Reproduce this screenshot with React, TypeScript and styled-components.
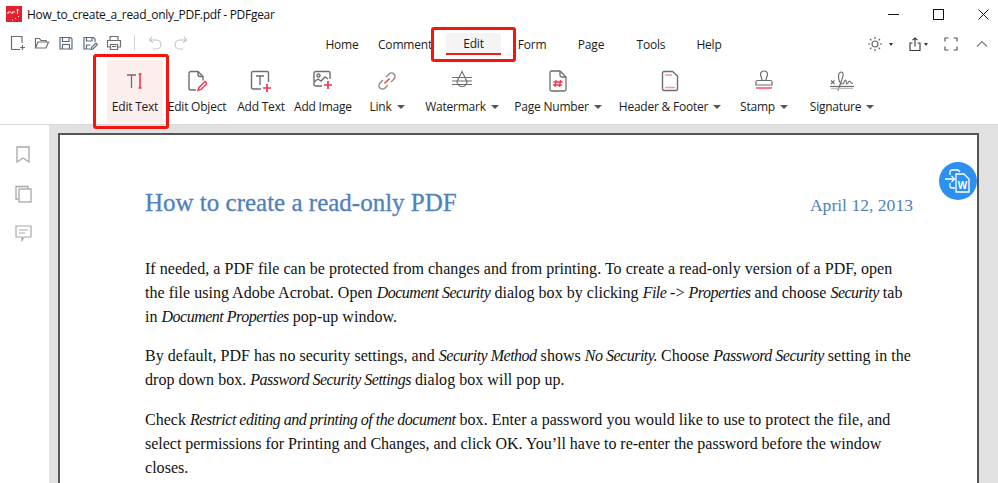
import React from "react";
import styled, { createGlobalStyle } from "styled-components";

const Global = createGlobalStyle`
  html, body { margin: 0; padding: 0; background: #fff; }
  body { width: 998px; height: 483px; overflow: hidden; font-family: "Open Sans", "Noto Sans", sans-serif; }
`;

const Shell = styled.div`
  position: relative;
  width: 998px;
  height: 483px;
  overflow: hidden;
  display: flex;
  flex-direction: column;
`;
const TitleBar = styled.div`
  height: 28px;
  display: flex;
  align-items: center;
  padding-left: 6px;
  flex: none;
`;
const TitleText = styled.div`
  margin-left: 5px;
  font-size: 12px;
  letter-spacing: -0.3px;
  color: #111;
  white-space: nowrap;
`;
const WindowButtons = styled.div`
  margin-left: auto;
  display: flex;
  align-items: center;
  gap: 34px;
  padding-right: 9px;
`;
const MenuRow = styled.div`
  height: 32px;
  flex: none;
  display: flex;
  align-items: center;
  position: relative;
`;
const Quick = styled.div`
  width: 313px;
  flex: none;
  display: flex;
  align-items: center;
  padding: 0 0 3px 10px;
  box-sizing: border-box;
  gap: 8px;
`;
const Divider = styled.div`
  width: 1px;
  height: 15px;
  background: #d5d5d5;
  margin: 0 5px 0 4px;
`;
const Tabs = styled.div`
  display: flex;
  align-items: center;
`;
const Tab = styled.div<{ $w: number; $gap?: number; $active?: boolean }>`
  width: ${(p) => p.$w}px;
  margin-left: ${(p) => p.$gap ?? 0}px;
  height: 22px;
  box-sizing: border-box;
  display: flex;
  align-items: center;
  justify-content: center;
  font-size: 12px;
  letter-spacing: -0.2px;
  color: #1b1b1b;
  white-space: nowrap;
  border-radius: 3px 3px 0 0;
  background: ${(p) => (p.$active ? "#f4f4f4" : "transparent")};
  border-bottom: ${(p) => (p.$active ? "2px solid #f01c1c" : "0")};
`;
const RightTools = styled.div`
  margin-left: auto;
  display: flex;
  align-items: center;
  padding-right: 2px;
`;
const RightBtn = styled.div<{ $w: number; $gap?: number }>`
  width: ${(p) => p.$w}px;
  display: flex;
  align-items: center;
  justify-content: center;
  gap: ${(p) => p.$gap ?? 2}px;
`;
const Toolbar = styled.div`
  height: 64px;
  flex: none;
  display: flex;
  padding-left: 107px;
  box-sizing: border-box;
`;
const Tool = styled.div<{ $w: number; $active?: boolean }>`
  width: ${(p) => p.$w}px;
  height: 63px;
  flex: none;
  border-radius: 3px;
  background: ${(p) => (p.$active ? "#fdeeee" : "transparent")};
  display: flex;
  flex-direction: column;
  align-items: center;
`;
const ToolIcon = styled.div`
  height: 26px;
  margin-top: 8px;
  display: flex;
  align-items: center;
  justify-content: center;
`;
const ToolLabel = styled.div`
  margin-top: 5px;
  font-size: 12px;
  letter-spacing: -0.22px;
  line-height: 16px;
  color: #1b1b1b;
  white-space: nowrap;
  display: flex;
  align-items: center;
  gap: 5px;
`;
const Caret = styled.span`
  width: 0;
  height: 0;
  border-left: 4px solid transparent;
  border-right: 4px solid transparent;
  border-top: 4px solid #555;
`;
const Body = styled.div`
  flex: 1;
  display: flex;
  background: #e1e1e1;
  border-top: 1px solid #d8d8d8;
  min-height: 0;
`;
const Sidebar = styled.div`
  width: 49px;
  flex: none;
  background: #fff;
  display: flex;
  flex-direction: column;
  align-items: center;
  padding: 21px 3px 0 0;
  box-sizing: border-box;
  gap: 22px;
`;
const PageArea = styled.div`
  flex: 1;
  padding: 8px 19px 0 9px;
  min-width: 0;
`;
const Page = styled.div`
  background: #fff;
  border: 2px solid #555;
  border-bottom: 0;
  height: 400px;
  box-sizing: border-box;
  padding: 50px 64px 0 85px;
  font-family: "Liberation Serif", serif;
  color: #111;
`;
const HeadRow = styled.div`
  display: flex;
  justify-content: space-between;
  align-items: baseline;
  color: #4f81bd;
  margin-bottom: 36px;
`;
const DocTitle = styled.div`
  font-size: 25px;
  line-height: 36px;
  font-weight: 400;
  -webkit-text-stroke: 0.3px #4f81bd;
`;
const DocDate = styled.div`
  font-size: 17.6px;
`;
const Para = styled.div<{ $mb: number }>`
  margin-bottom: ${(p) => p.$mb}px;
`;
const Line = styled.div<{ $sp?: number }>`
  font-size: 16px;
  line-height: 24px;
  white-space: nowrap;
  letter-spacing: ${(p) => p.$sp ?? 0.03}px;
`;
const It = styled.em`
  letter-spacing: -0.5px;
`;
const Convert = styled.div`
  position: absolute;
  left: 939px;
  top: 162px;
  width: 38px;
  height: 38px;
  border-radius: 50%;
  background: #2b90ef;
  display: flex;
  align-items: center;
  justify-content: center;
`;
const Highlight = styled.div<{ $x: number; $y: number; $w: number; $h: number }>`
  position: absolute;
  left: ${(p) => p.$x}px;
  top: ${(p) => p.$y}px;
  width: ${(p) => p.$w}px;
  height: ${(p) => p.$h}px;
  box-sizing: border-box;
  border: 3px solid #f5140f;
  border-radius: 3px;
  pointer-events: none;
`;

const G = "#6e6e6e";
const L = "#c4c4c4";
const R = "#f4364a";

const Ico = ({ s = 16, w, h, children, sw = 1.2, c = G }: { s?: number; w?: number; h?: number; children: React.ReactNode; sw?: number; c?: string }) => (
  <svg width={w ?? s} height={h ?? s} viewBox={`0 0 ${w ?? s} ${h ?? s}`} fill="none" stroke={c} strokeWidth={sw} style={{ display: "block" }}>
    {children}
  </svg>
);

const Logo = () => (
  <svg width="16" height="16" viewBox="0 0 16 16" style={{ display: "block" }}>
    <rect width="16" height="16" fill="#e5202e" />
    <path d="M2 8V6h3M6 8V6h3M10.5 4h2.5M11.5 8V3M12 10l1 1M9 12l1 1M6 14h1" stroke="#fff" strokeWidth="1" fill="none" />
  </svg>
);

const Q = {
  New: () => (
    <Ico s={16}>
      <path d="M10 14.5H1.5V1.5H12V8" />
      <path d="M12.5 10v5M10 12.5h5" />
    </Ico>
  ),
  Open: () => (
    <Ico s={16}>
      <path d="M1.5 13V3.5h4l1.5 2h5V7" />
      <path d="M1.5 13l2.5-6h10.5l-2.5 6z" />
    </Ico>
  ),
  Save: () => (
    <Ico s={16} c="#5a6b80">
      <path d="M2 2.5h10.5l1.5 1.5v10H2z" />
      <path d="M4.5 2.5v4h6.5v-4M4.5 14v-4.5h7V14" />
    </Ico>
  ),
  SaveAs: () => (
    <Ico s={16} c="#5a6b80">
      <path d="M8 14H2V2.5h9.5l1.5 1.5v3" />
      <path d="M4.5 2.5v3.5h5.5v-3.5M4.5 14v-4h4" />
      <path d="M9 14.5l.5-2 4.5-4.5 1.5 1.5-4.5 4.5z" />
    </Ico>
  ),
  Print: () => (
    <Ico s={16}>
      <path d="M4 5V1.5h8V5M4 12H1.5V5.5h13V12H12" />
      <path d="M4.5 9.5h7v5h-7z" />
      <path d="M6 11.5h4" />
    </Ico>
  ),
  Undo: ({ c }: { c: string }) => (
    <Ico s={16} c={c}>
      <path d="M4 1.5L1.5 5 5 7.5M1.5 5h7a4.2 4.2 0 010 9H5" />
    </Ico>
  ),
  Redo: ({ c }: { c: string }) => (
    <Ico s={16} c={c}>
      <path d="M12 1.5L14.5 5 11 7.5M14.5 5h-7a4.2 4.2 0 000 9H11" />
    </Ico>
  ),
};

const T = {
  EditText: () => (
    <Ico w={18} h={18} sw={1.3}>
      <path d="M1 3h9M5.5 3v13" />
      <path d="M14 2v14" stroke={R} strokeWidth="1.6" />
      <path d="M12.5 2h3M12.5 16h3" stroke={R} />
    </Ico>
  ),
  EditObject: () => (
    <Ico w={20} h={22} sw={1.4}>
      <path d="M9 20H4a2 2 0 01-2-2V3.500a2 2 0 012-2h7l5 5v4" />
      <path d="M11 1.500v3a2 2 0 002 2h3" />
      <path d="M11 20.500l1-3 6-6 2 2-6 6z" stroke={R} />
    </Ico>
  ),
  AddText: () => (
    <Ico w={22} h={22} sw={1.4}>
      <path d="M11 19H3a1.500 1.500 0 01-1.500-1.500V3A1.500 1.500 0 013 1.500h14A1.500 1.500 0 0118.500 3v9" />
      <path d="M6 6h8M10 6v9" />
      <path d="M17 14v8M13 18h8" stroke={R} strokeWidth="1.7" />
    </Ico>
  ),
  AddImage: () => (
    <Ico w={20} h={22} sw={1.4}>
      <path d="M9 16H2.500A1.500 1.500 0 011 14.500V3a1.500 1.500 0 011.500-1.500h13A1.500 1.500 0 0117 3v6" />
      <circle cx="5.500" cy="5.500" r="1.500" />
      <path d="M1 12l4-3 3 2 4-4 3 2" />
      <path d="M15 11v8M11 15h8" stroke={R} strokeWidth="1.7" />
    </Ico>
  ),
  Link: () => (
    <Ico s={18} sw={1.4} c="#8a8a8a">
      <path d="M8 5l3-3a3.500 3.500 0 015 5l-3 3M10 13l-3 3a3.500 3.500 0 01-5-5l3-3" />
      <path d="M6.500 11.500l5-5" stroke={R} strokeWidth="1.5" />
    </Ico>
  ),
  Watermark: () => (
    <Ico w={22} h={22} sw={1.1}>
      <path d="M11 1.500L6 11.500a5 5 0 0010 0z" />
      <path d="M1 7.500h20M1 11h20M1 14.500h20" />
    </Ico>
  ),
  PageNumber: () => (
    <Ico w={18} h={22} sw={1.3}>
      <path d="M11 1H2.500A1.500 1.500 0 001 2.500v17A1.500 1.500 0 002.500 21h13a1.500 1.500 0 001.500-1.500V7z" />
      <path d="M11 1v4.500A1.500 1.500 0 0012.500 7H17" />
      <path d="M7 10l-1 7M11.500 10l-1 7M4.500 12h9M4 15h9" stroke={R} strokeWidth="1.4" />
    </Ico>
  ),
  Header: () => (
    <Ico w={18} h={22} sw={1.4}>
      <path d="M11.500 1.500H3A1.500 1.500 0 001.500 3v16A1.500 1.500 0 003 20.500h12a1.500 1.500 0 001.500-1.500V6z" />
      <path d="M4 5h7M4 17.500h10" stroke="#f69aa3" strokeWidth="1.6" />
    </Ico>
  ),
  Stamp: () => (
    <Ico w={20} h={22}>
      <path d="M8 10.500c0-3-1.500-4-1.500-6a3.500 3.500 0 017 0c0 2-1.500 3-1.500 6" />
      <path d="M2 15v-3a1.500 1.500 0 011.500-1.500h13A1.500 1.500 0 0118 12v3z" />
      <path d="M2 18h16" stroke={R} strokeWidth="1.300" />
      <path d="M5 19.800h10" stroke="#fbcdd1" strokeWidth="1" />
    </Ico>
  ),
  Signature: () => (
    <Ico w={24} h={22} sw={1.2}>
      <path d="M1 10.500l3.500 3.500M4.500 10.500L1 14" />
      <path d="M8 20.500C10 14 14 6 13 3.500 12 1 8.500 2 8.500 6c0 4 1.500 8 3.500 8 2 0 2.500-4 3.500-4s.5 4 1.500 4 1.500-3 2.500-3 .5 2.500 3.500 2.500" />
      <path d="M0 16.500h24" />
      <path d="M1 18.500h22" stroke="#bbb" />
    </Ico>
  ),
};

const Sun = () => (
  <Ico s={16} c="#666">
    <circle cx="8" cy="8" r="3" />
    <path d="M8 1v2M8 13v2M1 8h2M13 8h2M3 3l1.400 1.400M11.600 11.600L13 13M3 13l1.400-1.400M11.600 4.400L13 3" />
  </Ico>
);
const Share = () => (
  <Ico s={14} c="#333" sw={1.1}>
    <path d="M4.500 6H2v7.500h10V6H9.500M7 9.500V1M4.500 3.200L7 1l2.500 2.200" />
  </Ico>
);
const Full = () => (
  <Ico s={14} c="#555" sw={1.2}>
    <path d="M1 4.500V1h3.500M9.500 1H13v3.500M13 9.500V13H9.500M4.500 13H1V9.500" />
  </Ico>
);
const Chevron = () => (
  <Ico w={12} h={8} c="#777" sw={1.1}>
    <path d="M1 6.500L6 1.500l5 5" />
  </Ico>
);
const SmallCaret = styled(Caret)`
  border-left-width: 2.500px;
  border-right-width: 2.500px;
  border-top-width: 3px;
  border-top-color: #333;
`;

const tools: { label: string; w: number; icon: React.ReactNode; caret?: boolean; active?: boolean }[] = [
  { label: "Edit Text", w: 56, icon: <T.EditText />, active: true },
  { label: "Edit Object", w: 68, icon: <T.EditObject /> },
  { label: "Add Text", w: 60, icon: <T.AddText /> },
  { label: "Add Image", w: 64, icon: <T.AddImage /> },
  { label: "Link", w: 64, icon: <T.Link />, caret: true },
  { label: "Watermark", w: 86, icon: <T.Watermark />, caret: true },
  { label: "Page Number", w: 106, icon: <T.PageNumber />, caret: true },
  { label: "Header & Footer", w: 118, icon: <T.Header />, caret: true },
  { label: "Stamp", w: 70, icon: <T.Stamp />, caret: true },
  { label: "Signature", w: 86, icon: <T.Signature />, caret: true },
];

export default function App() {
  return (
    <Shell>
      <Global />
      <TitleBar>
        <Logo />
        <TitleText>How_to_create_a_read_only_PDF.pdf - PDFgear</TitleText>
        <WindowButtons>
          <Ico w={11} h={11} c="#111" sw={1}><path d="M0 5.500h11" /></Ico>
          <Ico w={11} h={11} c="#111" sw={1}><rect x=".5" y=".5" width="10" height="10" /></Ico>
          <Ico w={11} h={11} c="#111" sw={1}><path d="M.5.5l10 10M10.500.5l-10 10" /></Ico>
        </WindowButtons>
      </TitleBar>
      <MenuRow>
        <Quick>
          <Q.New />
          <Q.Open />
          <Q.Save />
          <Q.SaveAs />
          <Q.Print />
          <Divider />
          <Q.Undo c={L} />
          <Q.Redo c={L} />
        </Quick>
        <Tabs>
          <Tab $w={58}>Home</Tab>
          <Tab $w={68}>Comment</Tab>
          <Tab $w={55} $gap={7} $active>Edit</Tab>
          <Tab $w={56} $gap={3}>Form</Tab>
          <Tab $w={62}>Page</Tab>
          <Tab $w={58}>Tools</Tab>
          <Tab $w={58}>Help</Tab>
        </Tabs>
        <RightTools>
          <RightBtn $w={44} $gap={6}><Sun /><SmallCaret /></RightBtn>
          <RightBtn $w={32}><Share /><SmallCaret /></RightBtn>
          <RightBtn $w={34}><Full /></RightBtn>
          <RightBtn $w={28}><Chevron /></RightBtn>
        </RightTools>
      </MenuRow>
      <Toolbar>
        {tools.map((t) => (
          <Tool key={t.label} $w={t.w} $active={t.active}>
            <ToolIcon>{t.icon}</ToolIcon>
            <ToolLabel>
              {t.label}
              {t.caret && <Caret />}
            </ToolLabel>
          </Tool>
        ))}
      </Toolbar>
      <Body>
        <Sidebar>
          <Ico w={14} h={17} c="#a8a8a8" sw={1.3}><path d="M1 1h12v15l-6-4-6 4z" /></Ico>
          <Ico w={17} h={18} c="#a8a8a8" sw={1.3}><path d="M3.500 14H1V1.500h12V4" /><rect x="4" y="4" width="12" height="13" /></Ico>
          <Ico w={17} h={17} c="#a8a8a8" sw={1.2}><path d="M1 1h15v11H9l-2 3.500V12H1z" /><path d="M4 5h9M4 8h6" /></Ico>
        </Sidebar>
        <PageArea>
          <Page>
            <HeadRow>
              <DocTitle>How to create a read-only PDF</DocTitle>
              <DocDate>April 12, 2013</DocDate>
            </HeadRow>
            <Para $mb={15}>
              <Line>If needed, a PDF file can be protected from changes and from printing. To create a read-only version of a PDF, open</Line>
              <Line>the file using Adobe Acrobat. Open <It>Document Security</It> dialog box by clicking <It>File -&gt; Properties</It> and choose <It>Security</It> tab</Line>
              <Line>in <It>Document Properties</It> pop-up window.</Line>
            </Para>
            <Para $mb={16}>
              <Line>By default, PDF has no security settings, and <It>Security Method</It> shows <It>No Security.</It> Choose <It>Password Security</It> setting in the</Line>
              <Line>drop down box. <It>Password Security Settings</It> dialog box will pop up.</Line>
            </Para>
            <Para $mb={0}>
              <Line>Check <It>Restrict editing and printing of the document</It> box. Enter a password you would like to use to protect the file, and</Line>
              <Line $sp={-0.02}>select permissions for Printing and Changes, and click OK. You’ll have to re-enter the password before the window</Line>
              <Line>closes.</Line>
            </Para>
          </Page>
        </PageArea>
      </Body>
      <Convert>
        <Ico w={28} h={26} c="#fff" sw={1.3}>
          <path d="M6 7V4a2 2 0 012-2h6l2 2" />
          <path d="M1 11h9M7.500 8l3 3-3 3" />
          <path d="M6 15v3a2 2 0 002 2h3" />
          <path d="M12 6h8l5 5v13H12z" />
          <text x="18.500" y="21" fontSize="10" fontWeight="700" fontFamily="Liberation Sans, sans-serif" fill="#fff" stroke="none" textAnchor="middle">W</text>
        </Ico>
      </Convert>
      <Highlight $x={93} $y={54} $w={76} $h={75} />
      <Highlight $x={431} $y={27} $w={85} $h={35} />
    </Shell>
  );
}
